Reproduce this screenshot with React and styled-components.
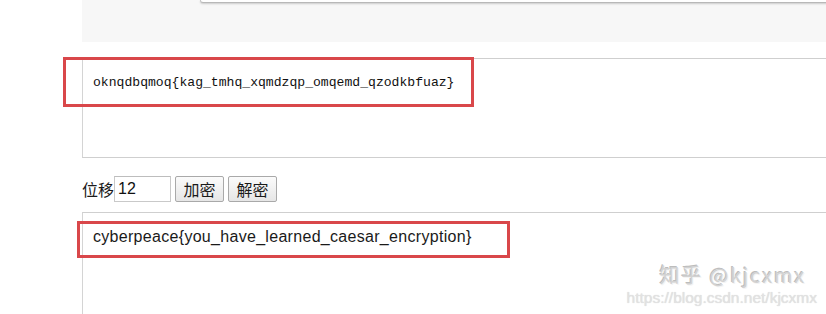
import React from 'react';
import styled, { createGlobalStyle } from 'styled-components';

const GlobalStyle = createGlobalStyle`
  html, body {
    margin: 0;
    padding: 0;
    background: #ffffff;
    overflow: hidden;
  }
  body {
    font-family: "Liberation Sans", "Noto Sans CJK SC", Arial, sans-serif;
  }
`;

const Page = styled.div`
  position: relative;
  width: 826px;
  height: 314px;
  overflow: hidden;
  display: flex;
  flex-direction: column;
  padding-left: 82px;
  box-sizing: border-box;
  & > * {
    flex-shrink: 0;
  }
`;

const TopPanel = styled.div`
  height: 42px;
  margin-right: -20px;
  background: #f7f7f7;
  padding-left: 118px;
`;

const TopEdge = styled.div`
  height: 2px;
  background: #fff;
  border-left: 1px solid #c4c4c4;
  border-bottom: 1px solid #b8b8b8;
  border-bottom-left-radius: 3px;
  box-shadow: 0 1px 2px rgba(0, 0, 0, 0.18);
`;

const Box = styled.div`
  position: relative;
  margin-top: ${(p) => p.$top}px;
  margin-right: -20px;
  height: ${(p) => p.$height}px;
  border: 1px solid #cfcfcf;
  border-left-color: #d4d4d4;
  box-sizing: border-box;
  padding: ${(p) => p.$padTop}px 0 0 10px;
  color: #111;
`;

const MonoText = styled.div`
  font-family: "Liberation Mono", "Noto Sans CJK SC", monospace;
  font-size: 13.1px;
  line-height: 16px;
  letter-spacing: 0;
`;

const SansText = styled.div`
  font-family: "Liberation Sans", "Noto Sans CJK SC", Arial, sans-serif;
  font-size: 16px;
  line-height: 20px;
  letter-spacing: 0.3px;
  color: #1a1a1a;
`;

const Highlight = styled.div`
  position: absolute;
  left: ${(p) => p.$left}px;
  top: ${(p) => p.$top}px;
  width: ${(p) => p.$width}px;
  height: ${(p) => p.$height}px;
  border: 3px solid #d9474a;
  box-sizing: border-box;
  pointer-events: none;
`;

const Controls = styled.div`
  display: flex;
  align-items: center;
  gap: 4px;
  margin-top: 17px;
  height: 27px;
  font-size: 16px;
  color: #1a1a1a;
  font-family: "Noto Sans CJK SC", "Liberation Sans", sans-serif;
`;

const Label = styled.span`
  margin-right: -4px;
  line-height: 26px;
`;

const ShiftInput = styled.div`
  width: 57px;
  height: 26px;
  box-sizing: border-box;
  border: 1px solid #c9c9c9;
  border-top-color: #bdbdbd;
  padding-left: 3px;
  font-family: "Liberation Sans", Arial, sans-serif;
  font-size: 16px;
  line-height: 24px;
  color: #111;
`;

const Button = styled.div`
  width: 49px;
  height: 26px;
  box-sizing: border-box;
  border: 1px solid #a9a9a9;
  border-radius: 2px;
  background: linear-gradient(#fbfbfb, #e6e6e6);
  display: flex;
  align-items: center;
  justify-content: center;
  font-size: 16px;
  color: #1a1a1a;
`;

const Watermark = styled.div`
  position: absolute;
  right: 9px;
  bottom: 7px;
  display: flex;
  flex-direction: column;
  align-items: center;
  pointer-events: none;
`;

const Brand = styled.div`
  font-family: "Noto Sans CJK SC", "Liberation Sans", sans-serif;
  font-size: 20px;
  line-height: 29px;
  color: #d2d2d2;
  text-shadow: 1px 1px 0 #f4f4f4, -1px -1px 0 #bdbdbd;
  margin-left: 22px;
  letter-spacing: 1.8px;
`;

const Url = styled.div`
  font-family: "Liberation Sans", Arial, sans-serif;
  font-size: 15.5px;
  line-height: 18px;
  color: #e2e2e2;
  text-shadow: 0 0 1px #d4d4d4;
`;

export default function App() {
  return (
    <>
      <GlobalStyle />
      <Page>
        <TopPanel>
          <TopEdge />
        </TopPanel>

        <Box $top={16} $height={100} $padTop={16}>
          <MonoText>oknqdbqmoq{'{'}kag_tmhq_xqmdzqp_omqemd_qzodkbfuaz{'}'}</MonoText>
          <Highlight $left={-20} $top={-2} $width={411} $height={50} />
        </Box>

        <Controls>
          <Label>位移</Label>
          <ShiftInput>12</ShiftInput>
          <Button>加密</Button>
          <Button>解密</Button>
        </Controls>

        <Box $top={10} $height={140} $padTop={14}>
          <SansText>cyberpeace{'{'}you_have_learned_caesar_encryption{'}'}</SansText>
          <Highlight $left={-6} $top={8} $width={433} $height={37} />
        </Box>

        <Watermark>
          <Brand>知乎 @kjcxmx</Brand>
          <Url>https://blog.csdn.net/kjcxmx</Url>
        </Watermark>
      </Page>
    </>
  );
}
